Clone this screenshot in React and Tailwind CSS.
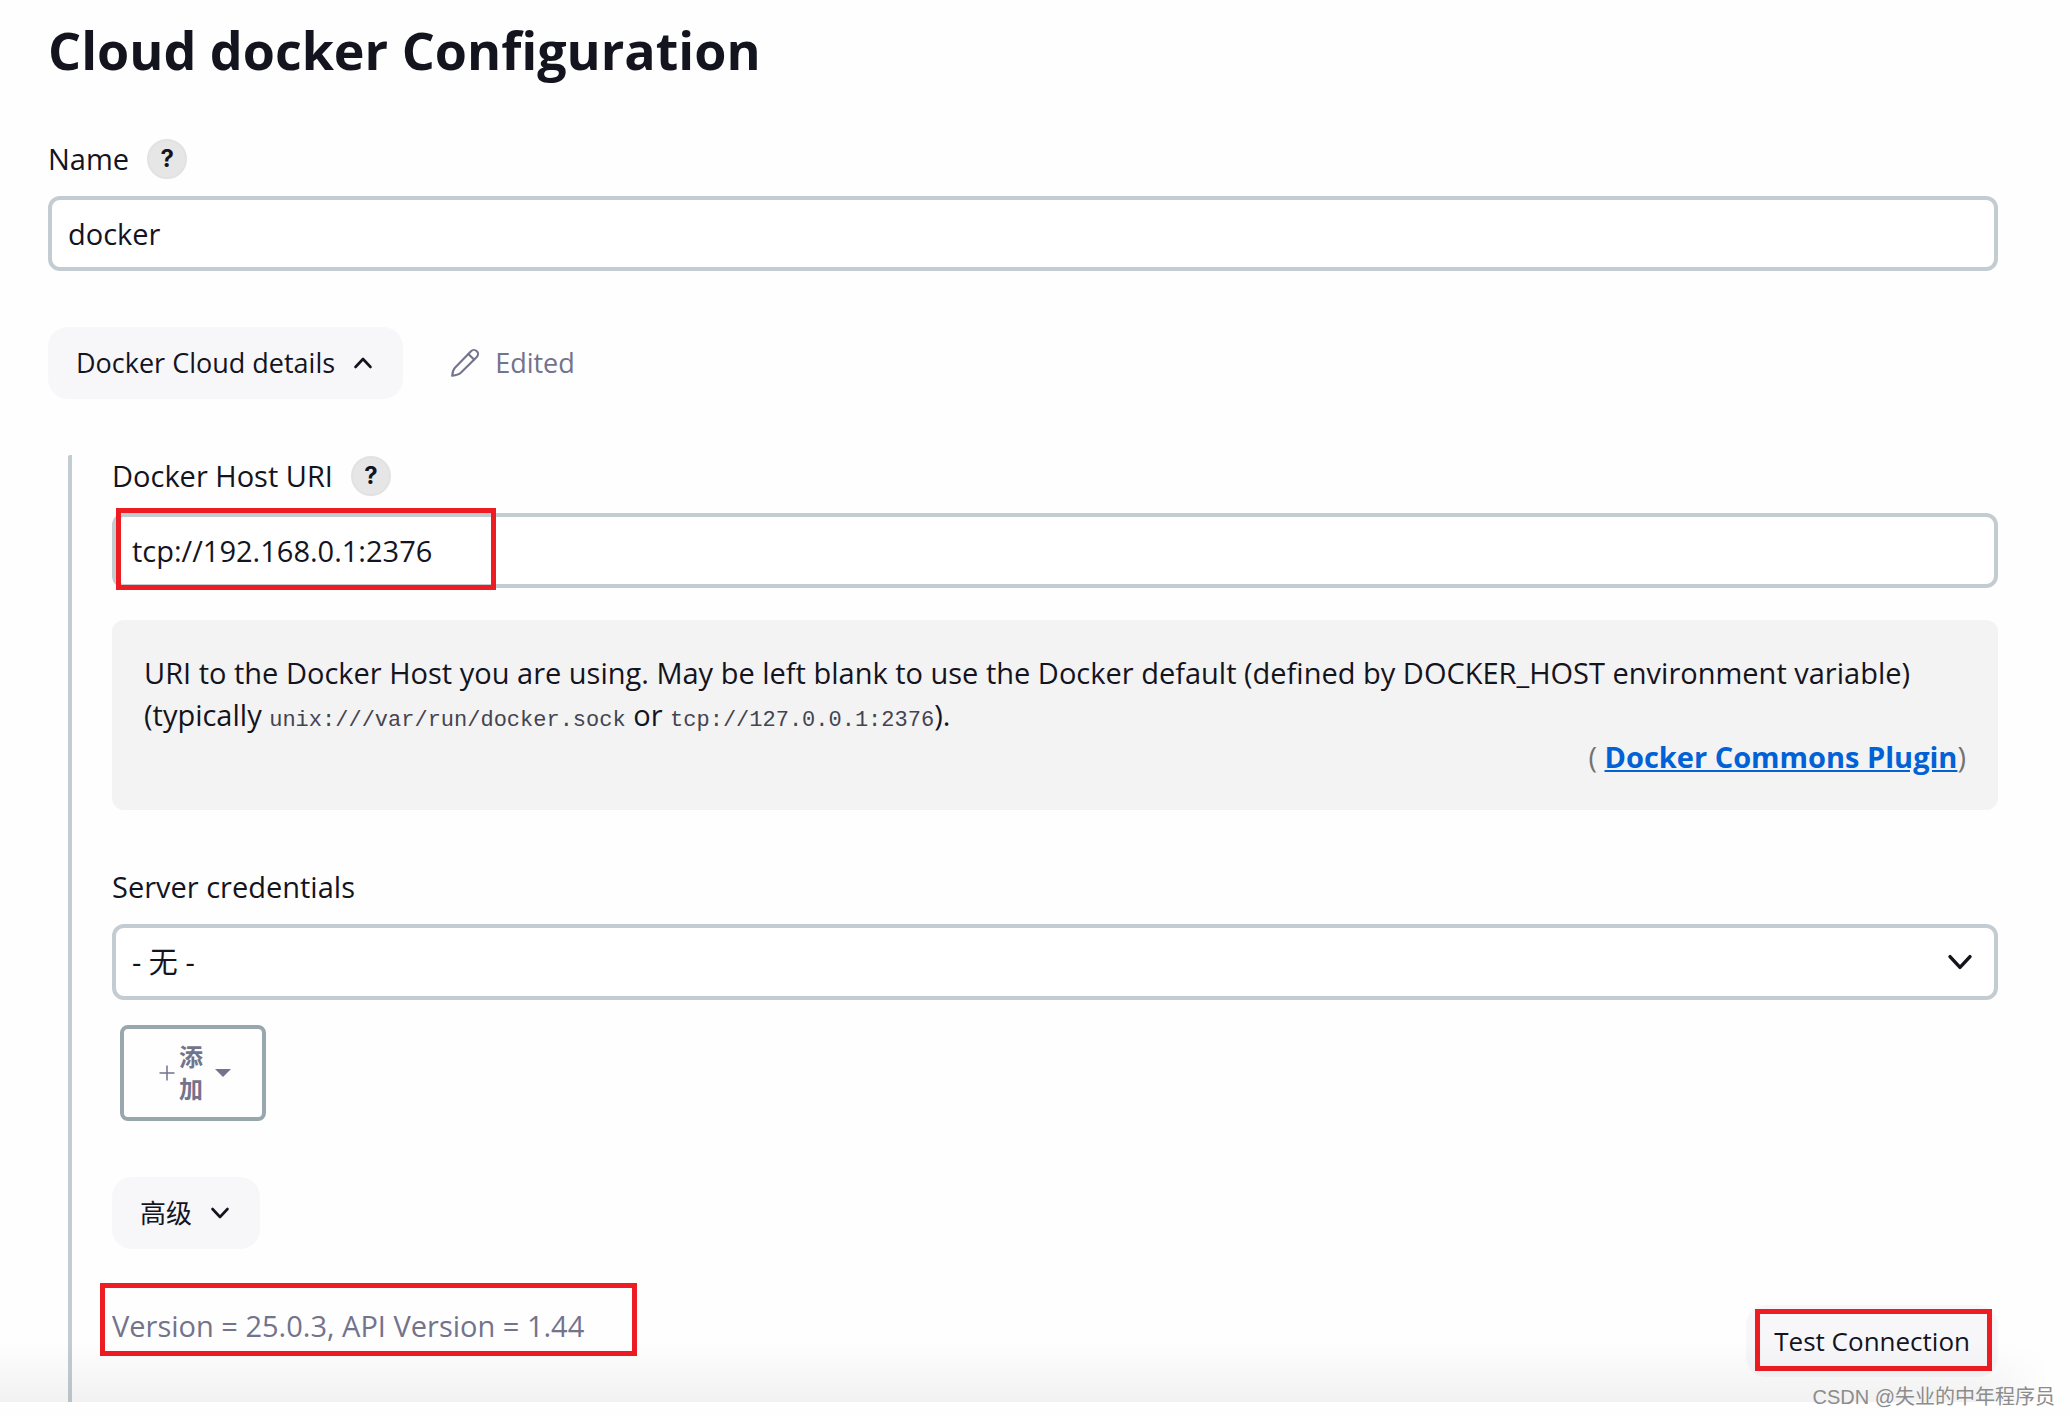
import React, { useState } from 'react';

function HelpButton({ label }) {
  return (
    <button
      type="button"
      aria-label={label}
      className="flex h-10 w-10 items-center justify-center rounded-full border-2 border-[#e2e2e2] bg-[#e6e6e6] font-['Inter',sans-serif] text-2xl leading-none font-bold"
    >
      ?
    </button>
  );
}

function Chevron({ className }) {
  return (
    <svg viewBox="0 0 24 24" className={className} fill="none" stroke="currentColor" strokeLinecap="round" strokeLinejoin="round">
      <path d="M4.5 8 L12 16 L19.5 8" strokeWidth="2.6" />
    </svg>
  );
}

function PencilIcon() {
  return (
    <svg viewBox="0 0 28 30" className="h-[30px] w-7" fill="none" stroke="currentColor" strokeWidth="2.1" strokeLinecap="round" strokeLinejoin="round">
      <path d="M1.2 27.8 C1.4 24.6 2.2 21.6 4.2 19.4 L20 3.2 A4 4 0 0 1 25.8 9 L9.8 24.8 C7.6 26.8 4.6 27.4 1.2 27.8 Z" />
      <path d="M17.4 6 L23 11.6" />
    </svg>
  );
}

// Red outline drawn over a control
function Highlight({ className }) {
  return <span aria-hidden="true" className={`pointer-events-none absolute border-[5px] border-[#ee1c23] ${className}`} />;
}

const fieldClass =
  'w-full rounded-xl border-4 border-[#c3ccd1] bg-white px-4 text-[29px] leading-9 outline-none';

const codeClass = "font-['Liberation_Mono',monospace] text-[22px] leading-none text-[#444450]";

export default function App() {
  const [name, setName] = useState('docker');
  const [uri, setUri] = useState('tcp://192.168.0.1:2376');

  return (
    <div className="relative bg-[#fefefe] font-['Open_Sans','Noto_Sans_CJK_SC',sans-serif] text-[29px] leading-[42px] text-[#14141f]">
      <main className="relative pt-[18px] pr-[72px] pl-12">
        <h1 className="text-[52px] leading-[64px] font-bold">Cloud docker Configuration</h1>

        <div className="mt-14 flex items-center gap-[18px]">
          <label htmlFor="name">Name</label>
          <HelpButton label="Help for feature: Name" />
        </div>
        <input
          id="name"
          type="text"
          value={name}
          onChange={(e) => setName(e.target.value)}
          className={`mt-4 block h-[75px] ${fieldClass}`}
        />

        <div className="mt-14 flex items-center gap-12 text-[27px]">
          <button type="button" className="flex h-[72px] items-center gap-4 rounded-[20px] bg-[#f7f7fa] px-7">
            Docker Cloud details
            <Chevron className="h-6 w-6 rotate-180" />
          </button>
          <span className="flex items-center gap-4 text-[#73738c]">
            <PencilIcon />
            Edited
          </span>
        </div>

        <div className="mt-14 ml-5 rounded-tl-xs border-l-4 border-[#c3ccd1] pb-[25px] pl-10">
          <div className="flex items-center gap-[18px]">
            <label htmlFor="uri">Docker Host URI</label>
            <HelpButton label="Help for feature: Docker Host URI" />
          </div>
          <div className="relative mt-4">
            <input
              id="uri"
              type="text"
              value={uri}
              onChange={(e) => setUri(e.target.value)}
              className={`block h-[75px] ${fieldClass}`}
            />
            <Highlight className="-top-[5px] left-1 h-[82px] w-[380px]" />
          </div>

          <div className="mt-8 rounded-xl bg-[#f3f3f3] p-8">
            <p>
              URI to the Docker Host you are using. May be left blank to use the Docker default (defined by
              DOCKER_HOST environment variable) (typically{' '}
              <code className={codeClass}>unix:///var/run/docker.sock</code> or{' '}
              <code className={codeClass}>tcp://127.0.0.1:2376</code>).
            </p>
            <p className="text-right text-[#737373]">
              ({' '}
              <a href="#docker-commons" className="font-bold text-[#0062d6] underline">
                Docker Commons Plugin
              </a>
              )
            </p>
          </div>

          <label htmlFor="credentials" className="mt-14 block">
            Server credentials
          </label>
          <div className="relative mt-4">
            <select id="credentials" className={`block h-[76px] appearance-none ${fieldClass}`}>
              <option>- 无 -</option>
            </select>
            <Chevron className="pointer-events-none absolute top-[22px] right-[22px] h-8 w-8" />
          </div>

          <button
            type="button"
            className="mt-[25px] ml-2 flex h-24 w-[146px] items-center justify-center gap-1 rounded-lg border-4 border-[#98a6ad] pl-1 text-2xl leading-8 font-bold text-[#73738c]"
          >
            <svg viewBox="0 0 16 16" className="h-4 w-4" fill="none" stroke="currentColor" strokeWidth="1.5">
              <path d="M8 0.5 V15.5 M0.5 8 H15.5" />
            </svg>
            <span className="w-6">添加</span>
            <svg viewBox="0 0 16 8" className="ml-2 h-2 w-4" fill="currentColor">
              <path d="M0 0 H16 L8 8 Z" />
            </svg>
          </button>

          <button type="button" className="mt-14 flex h-[72px] items-center gap-4 rounded-[20px] bg-[#f7f7fa] px-7 text-[26px]">
            高级
            <Chevron className="h-6 w-6" />
          </button>

          <div className="mt-14 flex items-start justify-between">
            <div className="relative text-[#73738c]">
              Version = 25.0.3, API Version = 1.44
              <Highlight className="-top-[22px] -left-3 h-[73px] w-[537px]" />
            </div>
            <button type="button" className="relative h-[72px] rounded-[20px] bg-[#f7f7fa] px-7 text-[26px]">
              Test Connection
              <Highlight className="top-1 right-[6px] h-[62px] w-[237px]" />
            </button>
          </div>
        </div>

        {/* Shadow of the sticky bottom bar, fading out at the right end */}
        <div className="pointer-events-none absolute inset-x-0 bottom-0 h-[60px] bg-linear-to-b from-black/0 to-black/5 mask-r-from-96% mask-r-to-99%" />
      </main>

      <footer className="relative h-[13px]">
        <div className="absolute right-[15px] bottom-[6px] font-['Liberation_Sans','Noto_Sans_CJK_SC',sans-serif] text-[20px] leading-6 text-[#8c8c8c]">
          CSDN @失业的中年程序员
        </div>
      </footer>
    </div>
  );
}
